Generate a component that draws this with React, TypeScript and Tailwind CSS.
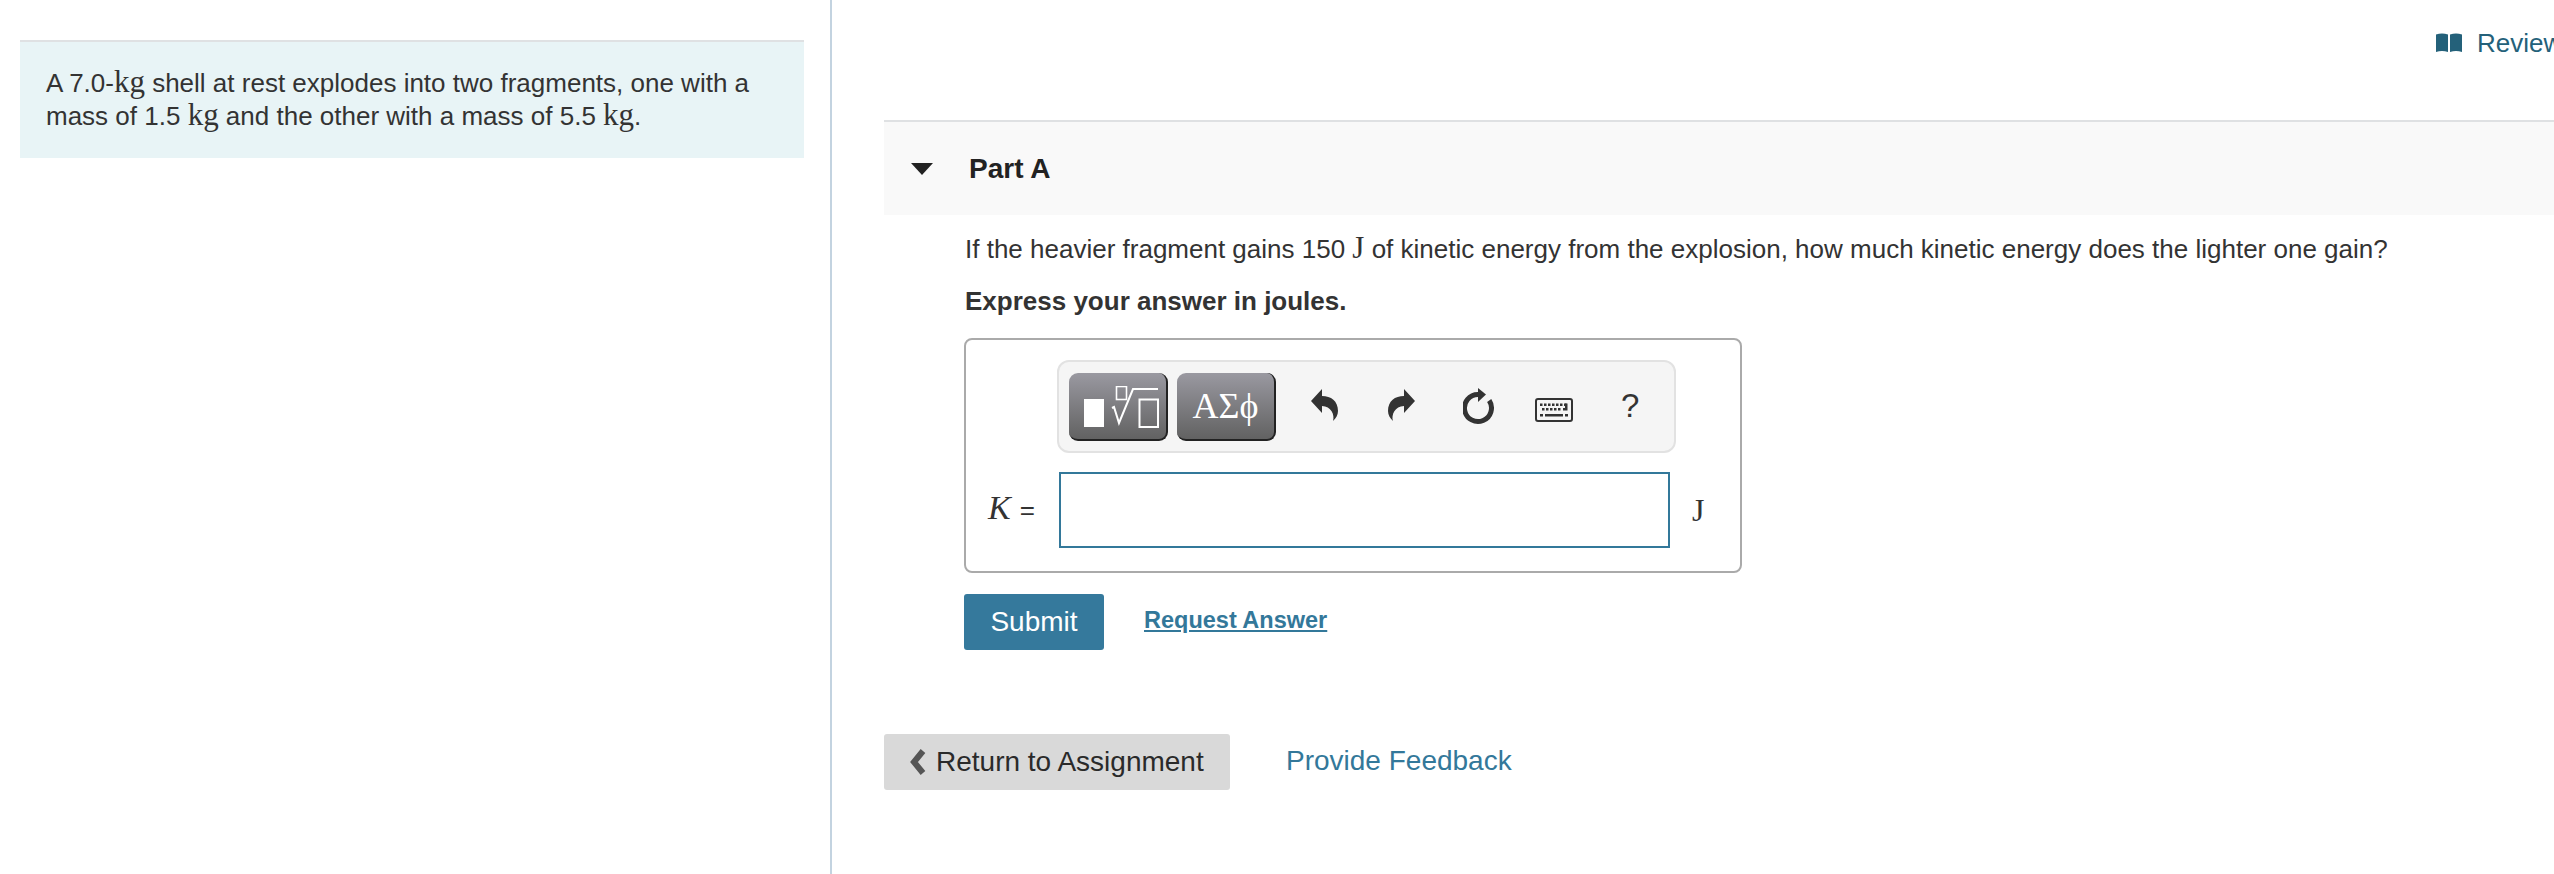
const Arrow = ({ flip = false }: { flip?: boolean }) => (
  <svg width="27" height="32" viewBox="0 0 27 32" className={flip ? "-scale-x-100" : ""}>
    <path d="M0 12 L11 0 V7 C20 7 27 12 27 22 C27 26 25 29 22 32 C24 26 20 17 11 17 V24 Z" fill="#333" />
  </svg>
);

const Reset = () => (
  <svg width="34" height="38" viewBox="0 0 34 38">
    <path d="M15 6.5 A13.5 13.5 0 1 0 26.2 12.5" fill="none" stroke="#333" strokeWidth="5" />
    <path d="M15 0 L23 6.5 L15 14 Z" fill="#333" />
  </svg>
);

const Keyboard = () => {
  const top = [5, 9, 13, 17, 21, 25, 29];
  const mid = [7, 11, 15, 19, 23];
  return (
    <svg width="38" height="24" viewBox="0 0 38 24">
      <rect x="1" y="1" width="36" height="22" rx="2" fill="#f5f5f5" stroke="#333" strokeWidth="2" />
      {top.map((x) => (
        <rect key={x} x={x} y="5.5" width="2.5" height="2.5" fill="#333" />
      ))}
      {mid.map((x) => (
        <rect key={x} x={x} y="10" width="2.5" height="2.5" fill="#333" />
      ))}
      <path d="M32.5 5.5 V12.5 H28 V10 H30 V5.5 Z" fill="#333" />
      <rect x="5" y="16" width="3" height="2.5" fill="#333" />
      <rect x="10" y="16" width="18" height="2.5" fill="#333" />
      <rect x="30" y="16" width="3" height="2.5" fill="#333" />
    </svg>
  );
};

const MathTemplates = () => (
  <svg width="76" height="42" viewBox="0 0 76 42">
    <rect x="0" y="13" width="20" height="28" fill="#fff" />
    <rect x="32.5" y="0.5" width="10" height="13" fill="none" stroke="#fff" strokeWidth="1.6" />
    <path d="M28 22 L30 21 L35 37 L49 3 H74" fill="none" stroke="#fff" strokeWidth="2" />
    <rect x="55.5" y="13.5" width="18.5" height="27.5" fill="none" stroke="#fff" strokeWidth="2" />
  </svg>
);

const Book = () => (
  <svg width="26" height="20" viewBox="0 0 26 20">
    <path d="M0 1.5 C4 0.2 8 0.2 12 1.5 V19 C8 17.8 4 17.8 0 19 Z" fill="#24617a" />
    <path d="M14 1.5 C18 0.2 22 0.2 26 1.5 V19 C22 17.8 18 17.8 14 19 Z" fill="#24617a" />
  </svg>
);

const M = ({ children }: { children: string }) => (
  <span className="font-['Liberation_Serif',serif] text-[31px] leading-none">{children}</span>
);

export default function App() {
  return (
    <div className="flex h-[874px] w-[2554px] overflow-hidden bg-white font-['Liberation_Sans',Arial,sans-serif] text-[#333]">
      <aside className="w-[832px] shrink-0 border-r-2 border-[#c3d3e0] pl-5 pr-[26px] pt-10">
        <div className="h-[118px] border-t-2 border-[#dfe1e3] bg-[#e8f4f6] pl-[26px] pr-4 pt-[24px] text-[26px] leading-[32px]">
          A 7.0-<M>kg</M> shell at rest explodes into two fragments, one with a
          <br />
          mass of 1.5 <M>kg</M> and the other with a mass of 5.5 <M>kg</M>.
        </div>
      </aside>

      <main className="min-w-0 flex-1 pl-[52px]">
        <div className="flex h-[80px] items-start whitespace-nowrap pl-[1552px] pt-[29px]">
          <div className="flex items-center gap-[15px] text-[26px] leading-7 text-[#24617a]">
            <Book />
            <span>Review</span>
          </div>
        </div>

        <div className="mt-10 flex h-[95px] items-center border-t-2 border-[#dfe1e3] bg-[#f9f9f9] pl-[27px]">
          <svg width="22" height="12" viewBox="0 0 22 12">
            <path d="M0 0 H22 L11 12 Z" fill="#222" />
          </svg>
          <h2 className="ml-[36px] text-[28px] font-bold text-[#222]">Part A</h2>
        </div>

        <div className="pl-[81px]">
          <p className="mt-[17px] whitespace-nowrap text-[26px] leading-[34px]">
            If the heavier fragment gains 150 <M>J</M> of kinetic energy from the explosion, how much kinetic energy does the lighter one gain?
          </p>
          <p className="mt-[18px] text-[26px] font-bold leading-[34px]">Express your answer in joules.</p>

          <div className="mt-[20px] ml-[-1px] h-[235px] w-[778px] rounded-[8px] border-2 border-[#aaaaaa] pt-[20px]">
            <div className="ml-[91px] flex h-[93px] w-[619px] items-center rounded-[12px] border-2 border-[#e2e2e2] bg-[#f5f5f5] pl-[10px]">
              <button className="flex h-[68px] w-[99px] items-center justify-center rounded-[9px] border-r-2 border-b-2 border-[#222] bg-linear-to-b from-[#9a99a1] to-[#626262] pl-[9px] pt-[2px]">
                <MathTemplates />
              </button>
              <button className="ml-[9px] flex h-[68px] w-[99px] items-center justify-center rounded-[9px] border-r-2 border-b-2 border-[#222] bg-linear-to-b from-[#9a99a1] to-[#626262] font-['Liberation_Serif',serif] text-[36px] text-white">
                ΑΣϕ
              </button>
              <span className="ml-[35px] mb-[3px] flex"><Arrow /></span>
              <span className="ml-[50px] mb-[3px] flex"><Arrow flip /></span>
              <span className="ml-[48px] flex"><Reset /></span>
              <span className="ml-[38px] mt-[7px] flex"><Keyboard /></span>
              <span className="ml-[48px] text-[33px] leading-none mb-[2px]">?</span>
            </div>

            <div className="mt-[19px] flex h-[76px] items-center">
              <span className="ml-[22px] w-[71px] whitespace-nowrap text-[26px]">
                <i className="font-['Liberation_Serif',serif] text-[34px] leading-none">K</i>
                <span className="ml-[9px]">=</span>
              </span>
              <div className="h-[76px] w-[611px] border-2 border-[#33789a] bg-white" />
              <span className="ml-[22px] font-['Liberation_Serif',serif] text-[32px] leading-none">J</span>
            </div>
          </div>

          <div className="mt-[21px] ml-[-1px] flex items-center">
            <button className="h-[56px] w-[140px] rounded-[3px] bg-[#35799c] text-[28px] text-white">Submit</button>
            <a className="ml-[40px] -mt-[2px] text-[23.5px] font-bold text-[#33789a] underline">Request Answer</a>
          </div>
        </div>

        <div className="mt-[84px] flex items-center">
          <button className="flex h-[56px] w-[346px] items-center rounded-[3px] bg-[#d9d9d9] pl-[26px] text-[28px] text-[#2a2a2a]">
            <svg width="16" height="26" viewBox="0 0 16 26" className="mr-[10px]">
              <path d="M13 2 L4 13 L13 24" fill="none" stroke="#555" strokeWidth="6" />
            </svg>
            Return to Assignment
          </button>
          <a className="ml-[56px] -mt-[2px] text-[28px] text-[#33789a]">Provide Feedback</a>
        </div>
      </main>
    </div>
  );
}
